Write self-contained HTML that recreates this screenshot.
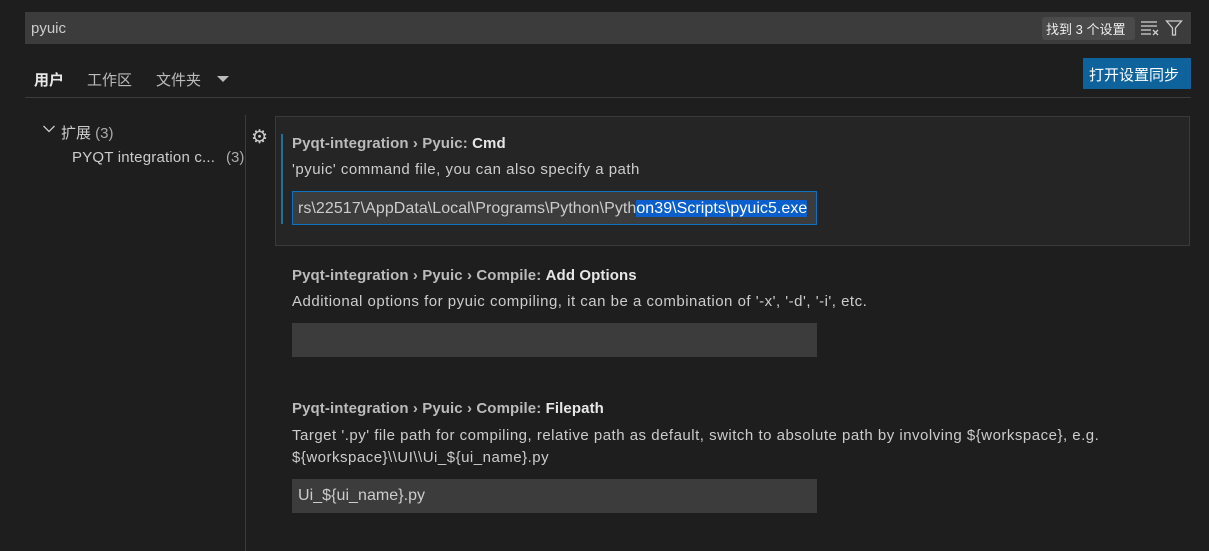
<!DOCTYPE html><html><head><meta charset="utf-8"><style>
body{margin:0;width:1209px;height:551px;background:#1e1e1e;font-family:"Liberation Sans","Noto Sans CJK SC",sans-serif;color:#ccc;font-size:15px;letter-spacing:0.5px;position:relative;overflow:hidden}
.a{position:absolute;white-space:nowrap}
.t{font-weight:600;color:#bbb;font-size:15px;letter-spacing:0.1px}.t b{color:#e7e7e7}
.inp{position:absolute;left:292px;width:525px;height:34px;background:#3c3c3c;box-sizing:border-box;line-height:34px;padding-left:6px;color:#ccc;font-size:16px;letter-spacing:0.05px}
</style></head><body>
<div class="a" style="left:25px;top:12px;width:1166px;height:32px;background:#3c3c3c"></div>
<div class="a" style="left:31px;top:20px;font-size:15px;color:#ccc;letter-spacing:0">pyuic</div>
<div class="a" style="left:1042px;top:17px;width:93px;height:23px;background:#4a4a4a;border-radius:3px"></div>
<div class="a" style="left:1046px;top:19px;font-size:13px;color:#eee;letter-spacing:0">找到 3 个设置</div>
<svg class="a" style="left:1140px;top:20px" width="20" height="16"><g stroke="#ccc" stroke-width="1.3"><line x1="1" y1="2" x2="17" y2="2"/><line x1="1" y1="6" x2="17" y2="6"/><line x1="1" y1="10" x2="11" y2="10"/><line x1="1" y1="14" x2="11" y2="14"/><line x1="13" y1="10" x2="18" y2="15"/><line x1="18" y1="10" x2="13" y2="15"/></g></svg>
<svg class="a" style="left:1165px;top:19px" width="18" height="18"><path d="M1.5 2h15l-6 7v7h-3v-7z" fill="none" stroke="#ccc" stroke-width="1.3"/></svg>
<div class="a" style="left:34px;top:69px;font-size:15px;color:#e7e7e7;letter-spacing:0;font-weight:600">用户</div>
<div class="a" style="left:87px;top:69px;font-size:15px;color:#bbb;letter-spacing:0">工作区</div>
<div class="a" style="left:156px;top:69px;font-size:15px;color:#bbb;letter-spacing:0">文件夹</div>
<svg class="a" style="left:216px;top:75px" width="14" height="8"><path d="M1 1h12l-6 6z" fill="#bbb"/></svg>
<div class="a" style="left:1083px;top:58px;width:108px;height:31px;background:#0e639c"></div>
<div class="a" style="left:1089px;top:64px;font-size:15px;color:#fff;letter-spacing:0">打开设置同步</div>
<div class="a" style="left:25px;top:97px;width:1166px;height:1px;background:#3c3c3c"></div>
<div class="a" style="left:245px;top:115px;width:1px;height:436px;background:#3c3c3c"></div>
<svg class="a" style="left:42px;top:124px" width="14" height="10"><path d="M1.5 2l5.5 5.5 5.5-5.5" fill="none" stroke="#ccc" stroke-width="1.3"/></svg>
<div class="a" style="left:61px;top:122px;font-size:15px;color:#ccc;letter-spacing:0">扩展 <span style="color:#aaa">(3)</span></div>
<div class="a" style="left:72px;top:149px;font-size:15px;color:#ccc;letter-spacing:0.2px">PYQT integration c...</div>
<div class="a" style="left:226px;top:149px;font-size:15px;color:#aaa;letter-spacing:0">(3)</div>
<div class="a" style="left:251px;top:128px;font-size:19px;color:#ccc;line-height:20px">⚙</div>
<div class="a" style="left:275px;top:116px;width:915px;height:130px;background:#252526;border:1px solid #3a3a3a;box-sizing:border-box"></div>
<div class="a" style="left:281px;top:134px;width:2px;height:90px;background:#1d6f9e"></div>
<div class="a t" style="left:292px;top:135px">Pyqt-integration › Pyuic: <b>Cmd</b></div>
<div class="a" style="left:292px;top:161px">'pyuic' command file, you can also specify a path</div>
<div class="inp" style="top:191px;border:1px solid #0e72c4;padding-left:5px;overflow:hidden">rs\22517\AppData\Local\Programs\Python\Pyth<span style="background:#0b5fcc;color:#fff">on39\Scripts\pyuic5.exe</span></div>
<div class="a t" style="left:292px;top:267px">Pyqt-integration › Pyuic › Compile: <b>Add Options</b></div>
<div class="a" style="left:292px;top:293px">Additional options for pyuic compiling, it can be a combination of '-x', '-d', '-i', etc.</div>
<div class="inp" style="top:323px"></div>
<div class="a t" style="left:292px;top:400px">Pyqt-integration › Pyuic › Compile: <b>Filepath</b></div>
<div class="a" style="left:292px;top:427px">Target '.py' file path for compiling, relative path as default, switch to absolute path by involving ${workspace}, e.g.</div>
<div class="a" style="left:292px;top:449px">${workspace}\\UI\\Ui_${ui_name}.py</div>
<div class="inp" style="top:479px">Ui_${ui_name}.py</div>
</body></html>
